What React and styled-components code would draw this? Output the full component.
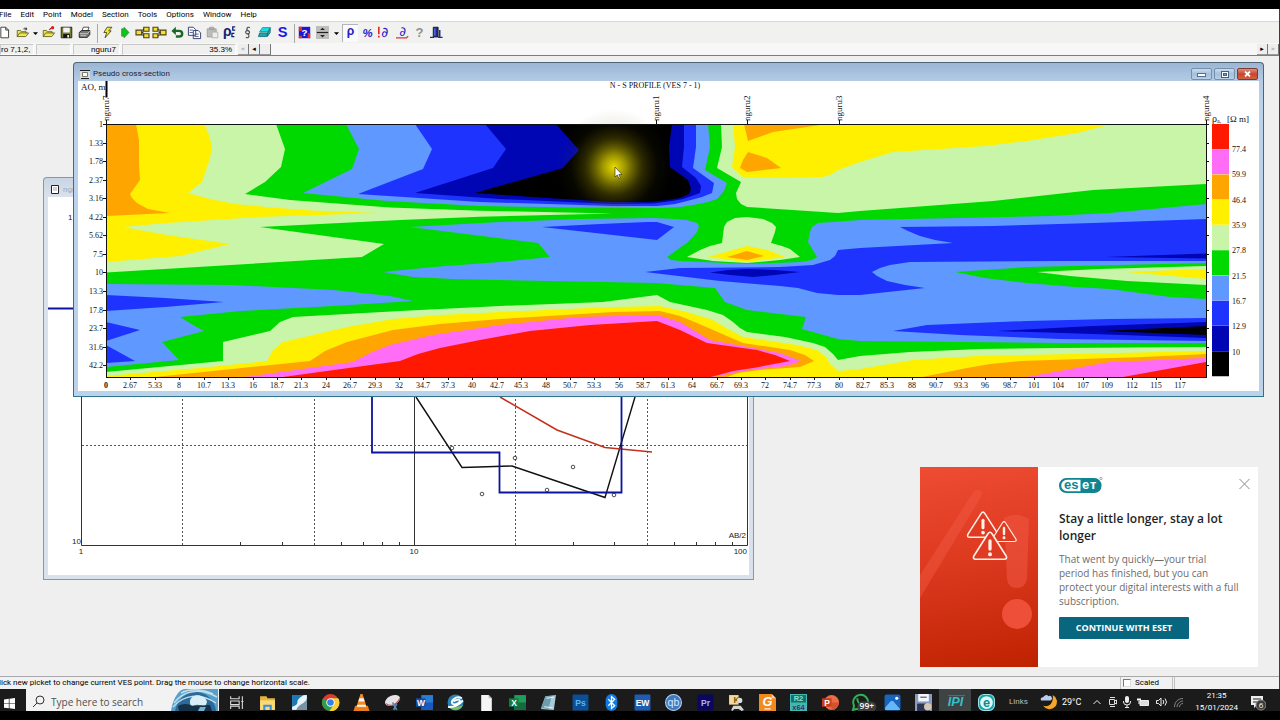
import React from "react";
import styled, { createGlobalStyle, css } from "styled-components";

const Global = createGlobalStyle`
  * { box-sizing: border-box; }
  body { margin: 0; background: #000; font-family: "Noto Sans", "Open Sans", sans-serif; }
  button, input { font-family: inherit; margin: 0; padding: 0; border: 0; background: none; color: inherit; }
`;

const ui = '"Open Sans", "Noto Sans", sans-serif';
const small = 'Roboto, "Open Sans", sans-serif';

const Screen = styled.div`
  display: flex;
  flex-direction: column;
  min-height: 100vh;
  padding: 9px 0;
  background: #000;
  overflow: hidden;
`;

const AppFrame = styled.main`
  flex: 1;
  display: flex;
  flex-direction: column;
  background: #efefef;
  border-right: 1px solid #3c3c3c;
`;

/* ---------- menu and tool bars ---------- */

const MenuBar = styled.nav`
  display: flex;
  gap: 9px;
  height: 13px;
  padding-left: 20px;
  background: #fff;
  border-bottom: 1px solid #d8d8d8;
`;

const MenuItem = styled.button`
  height: 12px;
  font: 8px/12px ${small};
  color: #000;
  ${(p) => p.$first && css`margin-left: -21px;`}
`;

const ToolBar = styled.div`
  display: flex;
  height: 21px;
  background: #f1f1f0;
`;

const ToolGroup = styled.div`
  display: flex;
  align-items: center;
  justify-content: space-between;
  flex: 0 0 ${(p) => p.$w}px;
  margin-left: ${(p) => p.$gap || 0}px;
`;

const ToolButton = styled.button`
  display: flex;
  align-items: center;
  justify-content: center;
  width: ${(p) => (p.$narrow ? 6 : 16)}px;
  height: 18px;
  ${(p) => p.$down && css`background: #fafafc; box-shadow: inset 1px 1px #b4b4bc;`}
  svg { width: ${(p) => (p.$narrow ? 5 : 13)}px; height: ${(p) => (p.$narrow ? 14 : 13)}px; display: block; overflow: visible; }
`;

const ToolSep = styled.span`
  flex: 0 0 1px;
  margin: 2px 0 0 4px;
  background: #a9a9a9;
`;

const InfoBar = styled.div`
  display: flex;
  align-items: center;
  height: 13px;
  background: #f7f7f7;
  border-bottom: 1px solid #7d7d7d;
`;

const InfoCell = styled.span`
  width: ${(p) => p.$w}px;
  height: 11px;
  margin-right: 2px;
  padding-right: ${(p) => p.$pad || 3}px;
  background: #f0f0ef;
  border: 1px solid #c9c9c9;
  border-right-color: #fff;
  border-bottom-color: #fff;
  font: 8px/10px "Liberation Sans", sans-serif;
  text-align: ${(p) => (p.$left ? "left" : "right")};
  white-space: nowrap;
`;

const ScrollKey = styled.button`
  width: 11px;
  height: 11px;
  margin-left: ${(p) => (p.$push ? "auto" : "0")};
  background: #eee;
  border-right: 1px solid #777;
  border-bottom: 1px solid #999;
  font: 7px/8px "DejaVu Sans", sans-serif;
  color: ${(p) => (p.$dim ? "#999" : "#000")};
`;

/* ---------- document windows ---------- */

const Workspace = styled.section`
  position: relative;
  flex: 1;
  min-height: 620px;
  overflow: hidden;
  background: #efefef;
`;

const Win = styled.section`
  position: absolute;
  left: ${(p) => p.$x}px;
  top: ${(p) => p.$y}px;
  width: ${(p) => p.$w}px;
  padding: 0 4px ${(p) => (p.$active ? 5 : 4)}px;
  border: 1px solid ${(p) => (p.$active ? "#4e6477" : "#8a97a6")};
  border-bottom-color: ${(p) => (p.$active ? "#2f7590" : "#8797a8")};
  border-radius: 4px 4px 0 0;
  background: ${(p) => (p.$active
    ? "linear-gradient(#9bb6d4 0, #b3cbe5 18px, #bad2ea 40px, #bad2ea 100%)"
    : "linear-gradient(#c9d5e3 0, #d8e1ec 18px, #d8e1ec 100%)")};
`;

const WinTitle = styled.header`
  display: flex;
  align-items: center;
  gap: 3px;
  height: ${(p) => (p.$tall ? 19 : 18)}px;
  padding: 4px 1px 0 2px;
`;

const WinIcon = styled.svg`
  display: block;
  width: 10px;
  height: 9px;
`;

const WinName = styled.h1`
  flex: 1;
  margin: 0;
  font: 8px/10px ${small};
  color: ${(p) => (p.$dim ? "#9aa8b8" : "#1a2430")};
`;

const WinKeys = styled.div`
  display: flex;
  gap: 2px;
`;

const WinKey = styled.button`
  display: flex;
  align-items: center;
  justify-content: center;
  width: 21px;
  height: 12px;
  border: 1px solid ${(p) => (p.$close ? "#7d3a33" : "#7690ab")};
  border-radius: 2px;
  background: ${(p) => (p.$close
    ? "linear-gradient(#dc9080, #c8452c 50%, #cf6246)"
    : "linear-gradient(#c9dbee, #a5c0dd 50%, #b7cfe7)")};
`;

const Client = styled.div`
  background: #fff;
  svg { display: block; width: 100%; height: auto; }
`;

/* ---------- notification ---------- */

const Toast = styled.aside`
  position: absolute;
  right: 21px;
  bottom: 9px;
  display: flex;
  width: 338px;
  min-height: 200px;
  background: #fff;
`;

const ToastArt = styled.div`
  flex: 0 0 118px;
  background: linear-gradient(170deg, #ee4c33 0, #dd3a20 45%, #be2200 100%);
  svg { display: block; width: 118px; height: 200px; }
`;

const ToastBody = styled.div`
  flex: 1;
  padding: 9px 8px 0 21px;
`;

const ToastTop = styled.div`
  display: flex;
  justify-content: space-between;
  height: 34px;
  svg { display: block; }
`;

const CloseButton = styled.button`
  align-self: flex-start;
  width: 11px;
  height: 15px;
`;

const ToastTitle = styled.h2`
  margin: 0 0 8px;
  font: 600 12px/17px ${ui};
  color: #1f1f1f;
  white-space: nowrap;
`;

const ToastText = styled.p`
  margin: 0;
  font: 10px/14px ${ui};
  color: #6c6c6c;
  white-space: nowrap;
`;

const Cta = styled.button`
  width: 130px;
  height: 22px;
  margin-top: 9px;
  border-radius: 1px;
  background: #08677f;
  color: #fff;
  font: 700 9px/22px ${ui};
`;

/* ---------- status and task bars ---------- */

const StatusBar = styled.footer`
  display: flex;
  height: 13px;
  background: #f1f1f1;
  border-top: 1px solid #a8a8a8;
  font: 8px/12px ${small};
  color: #000;
`;

const StatusText = styled.span`
  flex: 1;
  margin-left: -1px;
  white-space: nowrap;
`;

const ScaledBox = styled.label`
  display: flex;
  align-items: center;
  gap: 4px;
  width: 53px;
  border-left: 1px solid #c2c2c2;
  border-right: 1px solid #c2c2c2;
  input {
    appearance: none;
    width: 8px;
    height: 8px;
    margin-left: 2px;
    background: #fff;
    border: 1px solid #777;
    border-right-color: #ddd;
    border-bottom-color: #ddd;
  }
`;

const StatusEnd = styled.span`
  width: 105px;
  margin-left: 1px;
  border-left: 1px solid #c2c2c2;
`;

const TaskBar = styled.footer`
  display: flex;
  height: 22px;
  overflow: hidden;
  background: #1b1b1b;
  color: #eee;
`;

const StartButton = styled.button`
  flex: 0 0 26px;
  padding: 7px 0 0 4px;
  svg { display: block; width: 11px; height: 11px; }
`;

const SearchBox = styled.label`
  display: flex;
  flex: 0 0 193px;
  min-width: 0;
  height: 22px;
  align-items: center;
  background: #f2f2f2;
  color: #444;
  svg { display: block; flex: none; }
  input {
    flex: 1;
    width: 0;
    min-width: 0;
    height: 20px;
    margin: 4px 0 0 6px;
    font: 10px/20px ${ui};
    outline: 0;
  }
  input::placeholder { color: #505050; opacity: 1; }
`;

const TaskIcons = styled.div`
  display: flex;
  flex: 0 1 783px;
  padding-left: 2px;
`;

const TaskButton = styled.button`
  display: flex;
  flex: 1;
  justify-content: center;
  padding-top: 5px;
  ${(p) => p.$on && css`background: #3e4344;`}
  svg { display: block; width: 17px; height: 17px; overflow: visible; }
`;

const Tray = styled.div`
  display: flex;
  flex: 1;
  height: 26px;
  align-items: center;
  justify-content: space-between;
  padding: 0 14px 0 7px;
  svg { display: block; }
`;

const TrayText = styled.span`
  font: ${(p) => p.$size}px/20px ${small};
  color: ${(p) => (p.$dim ? "#bbb" : "#fff")};
`;

const Weather = styled.div`
  display: flex;
  align-items: center;
  gap: 5px;
`;

const TrayIcons = styled.div`
  display: flex;
  align-items: center;
  justify-content: space-between;
  width: 90px;
`;

const Clock = styled.time`
  height: 26px;
  padding-top: 1px;
  font: 8px/12px ${small};
  text-align: center;
  color: #fff;
  span { display: block; }
`;

/* ---------- pseudo section data ---------- */

const C = {
  red: "#ff1900", pink: "#ff6df6", orange: "#ffa500", yellow: "#fff000", lime: "#c8f5a8",
  green: "#00d900", sky: "#5f99ff", blue: "#1f33ff", navy: "#0006b4", black: "#000",
};

const regions = [
  ["green", "106,124 1206,124 1206,377 106,377"],
  ["lime", "106,124 276,124 285,149 281,167 265,182 245,194 290,200 390,207.5 480,210.7 612,213.5 480,216.7 400,220 260,227 384,244 362,257 106,272.5"],
  ["yellow", "106,124 204,124 209,135 212,147 210,158 207,167 202,182 188,193 210,199 235,204 267,207 310,210.5 377,213 260,217 167,223 123,227 167,235 230,244 180,256 106,262"],
  ["orange", "106,124 136,124 139,140 139,165 140,180 130,194 132,198 137,203 148,209 170,213 106,216"],
  ["sky", "346,124 359,149 352,169 303,193 387,201 480,206 613,208 660,208 680,207 693,205 708,202 717,199 724,191 727,183 705,170 710,147 708,124"],
  ["blue", "415,124 432,149 423,169 358,194 480,202 613,206 657,206 675,204 687,201 702,197 712,193 714,183 693,168 696,147 696,124"],
  ["navy", "485,124 506,149 493,168 415,193 500,199 613,204 653,203.5 672,201 683,199 700,193 701,186 696,178 682,167 684,147 684,124"],
  ["black", "556,124 579,150 563,168 475,193 547,198 613,202 650,202 668,200 680,198 689,194 691,189 688,180 670,167 669,147 672,124"],
  ["lime", "721,124 722,147 717,168 741,182 736,193 737,199 741,204 747,207 838,213 860,211 993,201 1093,190 1206,184 1206,124"],
  ["yellow", "733,124 735,147 732,167 743,177 757,178 823,177 832,174 838,170 860,162 893,152 940,149 985,146 1027,141 1077,133 1112,124"],
  ["orange", "744,124 748,141 773,132 827,124"],
  ["orange", "748,152 767,158 781,168 747,172 740,168 743,160"],
  ["sky", "410,227 500,222 580,219 653,218 675,219 687,220 697,223 699,226 697,232 688,242 667,257 671,260 680,261 747,264 800,262 812,260 817,257 808,242 810,232 812,227 818,223 833,222 860,220 960,218 1050,216 1110,213 1206,204 1206,343 1060,343 860,341 838,339 802,329 806,317 747,310 725,302 715,288 657,283 550,281 453,279 413,277 383,272 433,267 500,262 550,257 538,243"],
  ["blue", "542,227 600,224 647,222 657,222 674,227 657,240"],
  ["blue", "645,272 680,268 780,267 813,265 830,260 835,256 838,250 860,248 953,243 935,240 920,236 908,231 900,227 993,226 1093,223 1206,219 1206,261 1060,261 910,262 890,265 880,268 872,272 877,276 887,281 905,285 925,288 860,295 838,295 817,293 798,288 780,286 720,281"],
  ["navy", "710,272.5 728,270 747,269 775,270 800,272 775,275 753,277 730,275"],
  ["navy", "1105,257 1206,253.5 1206,258.5"],
  ["green", "955,272 1027,267 1206,263 1206,299 1170,297 1140,293 1110,289 1075,287 1027,283 985,278"],
  ["lime", "1037,272 1100,269 1206,266 1206,285 1127,281 1070,276"],
  ["yellow", "1127,272 1206,269 1206,279"],
  ["blue", "893,331 910,328 927,325 1027,321 1110,319 1206,318 1206,341 1060,339 960,335"],
  ["navy", "997,331 1093,326 1206,322 1206,338 1093,334"],
  ["black", "1103,331 1206,326 1206,335"],
  ["lime", "747,217 763,219 772,223 776,227 775,232 771,243 782,246 790,249 800,257 780,260 747,263 713,261 687,257 700,250 710,246 722,243 724,227 727,222 735,218"],
  ["yellow", "708,257 747,246 768,250 785,257 747,262"],
  ["orange", "727,257 747,251 764,256 747,260"],
  ["sky", "106,284 233,285 333,290 390,296 413,301 333,306 240,311 180,317 193,325 204,331 162,342 179,360 106,367"],
  ["blue", "106,295 165,298 224,302 165,307 106,311"],
  ["blue", "106,322 140,330 106,341"],
  ["blue", "106,345 135,361 106,363"],
  ["lime", "106,372 223,361 223,342 270,331 280,322 293,317 400,311 500,306 603,302 657,295 670,302 707,310 723,315 733,322 740,328 747,332 785,337 813,343 825,347 833,354 838,360 860,356 910,352 980,349 1060,348 1206,347 1206,377 106,377"],
  ["yellow", "106,376 200,368 267,361 273,350 283,342 347,327 393,319 440,315 500,312 613,307 660,306 687,312 713,320 728,329 743,337 797,345 817,350 826,357 830,364 838,371 860,369 913,360 977,356 1206,351 1206,377 106,377"],
  ["orange", "155,377 310,361 325,351 347,342 393,330 440,324 500,319 613,312 660,311 680,316 697,323 743,343 790,350 805,355 814,361 800,367 760,370 738,373 727,377"],
  ["orange", "922,377 967,368 990,364 1020,361 1143,357 1206,354 1206,377"],
  ["pink", "245,377 353,362 370,353 390,345 433,335 500,325 580,317 657,315 680,322 710,340 780,353 801,361 787,366 743,371 713,377"],
  ["red", "283,377 400,361 418,354 440,348 480,340 530,331 590,325 657,321 680,330 707,343 757,350 775,355 790,361 753,368 733,371 711,377"],
  ["pink", "1026,377 1110,362 1206,358 1206,377"],
  ["red", "1123,377 1206,362 1206,377"],
];

const depths = ["1", "1.33", "1.78", "2.37", "3.16", "4.22", "5.62", "7.5", "10", "13.3", "17.8", "23.7", "31.6", "42.2"];
const distances = "2.67 5.33 8 10.7 13.3 16 18.7 21.3 24 26.7 29.3 32 34.7 37.3 40 42.7 45.3 48 50.7 53.3 56 58.7 61.3 64 66.7 69.3 72 74.7 77.3 80 82.7 85.3 88 90.7 93.3 96 98.7 101 104 107 109 112 115 117".split(" ");
const scale = [["red", "77.4"], ["pink", "59.9"], ["orange", "46.4"], ["yellow", "35.9"], ["lime", "27.8"], ["green", "21.5"], ["sky", "16.7"], ["blue", "12.9"], ["navy", "10"], ["black", ""]];
const pickets = [["nguru7", 106], ["nguru1", 656], ["nguru2", 747], ["nguru3", 839], ["nguru4", 1206]];

function PseudoSection() {
  return (
    <svg viewBox="78 81 1181 310" fontFamily='"Liberation Serif", serif' fontSize="8" fill="#111" role="img" aria-label="Resistivity pseudo cross-section">
      <defs>
        <radialGradient id="glow">
          <stop offset="0" stopColor="#e8dc00" />
          <stop offset=".2" stopColor="#c4ba00" stopOpacity=".8" />
          <stop offset=".5" stopColor="#807800" stopOpacity=".35" />
          <stop offset=".75" stopColor="#605800" stopOpacity=".08" />
          <stop offset="1" stopColor="#504c00" stopOpacity="0" />
        </radialGradient>
        <clipPath id="plot"><rect x="106" y="124" width="1100" height="253" /></clipPath>
      </defs>
      <rect x="78" y="81" width="1181" height="310" fill="#fff" />
      <g clipPath="url(#plot)">
        {regions.map(([c, pts], i) => <polygon key={i} points={pts} fill={C[c]} />)}
      </g>
      <circle cx="614" cy="167" r="58" fill="url(#glow)" />
      <path d="M106.500 124V377.500M1206.500 124V377.500M106 124.500H1207M106 377.500H1207" stroke="#111" fill="none" />
      <path d="M106.500 81V97" stroke="#000" strokeWidth="2" />
      <text x="81" y="90" fontSize="9">AO, m</text>
      <text x="655" y="88" fontSize="8" textAnchor="middle">N - S PROFILE (VES 7 - 1)</text>
      {pickets.map(([name, x]) => (
        <g key={name}>
          <path d={`M${x + 0.5} 120v4`} stroke="#111" />
          <text transform={`translate(${x + 3} 121) rotate(-90)`} fontSize="9">{name}</text>
        </g>
      ))}
      {depths.map((d, i) => (
        <g key={d}>
          <path d={`M103 ${124.5 + Math.round(i * 18.55)}h3M1206 ${124.5 + Math.round(i * 18.55)}h3`} stroke="#111" />
          <text x="103" y={127 + Math.round(i * 18.55)} textAnchor="end">{d}</text>
        </g>
      ))}
      <text x="106" y="388" textAnchor="middle" fontWeight="700">0</text>
      {distances.map((d, i) => {
        const x = Math.round(106 + (i + 1) * 24.42);
        return (
          <g key={d}>
            <path d={`M${x + 0.5} 377v3`} stroke="#111" />
            <text x={x} y="388" textAnchor="middle">{d}</text>
          </g>
        );
      })}
      {scale.map(([c, label], i) => (
        <g key={c}>
          <rect x="1212" y={124 + i * 25.25} width="17" height="25" fill={C[c]} />
          <text x="1232" y={152 + i * 25.35}>{label}</text>
        </g>
      ))}
      <text x="1212" y="122" fontSize="10">ρ<tspan fontSize="6" dy="1">a,</tspan></text>
      <text x="1227" y="122" fontSize="9">[Ω m]</text>
      <path d="M615 167v10l2.300-2 1.600 3.600 1.500-.7-1.600-3.400h3.200z" fill="#fff" stroke="#222" strokeWidth=".6" />
    </svg>
  );
}

function SoundingCurve() {
  const minor = [240, 282, 341, 363, 382, 399, 573, 614, 674, 696, 715, 732];
  const points = [[452, 448], [515, 458], [573, 467], [482, 494], [547, 490], [614, 495]];
  return (
    <svg viewBox="48 197 701 378" fontFamily='"Liberation Sans", sans-serif' fontSize="8" fill="#222" role="img" aria-label="Sounding curve">
      <path d="M81.500 215V545.500H747.500M747.500 215V545.500M414.500 215V545" stroke="#333" fill="none" />
      <path d="M182.500 215V545M314.500 215V545M515.500 215V545M647.500 215V545M82 445.500H747" stroke="#555" strokeDasharray="2 2" fill="none" />
      {minor.map((x) => <path key={x} d={`M${x + 0.5} 545v-3`} stroke="#333" />)}
      <path d="M416 397L462 467.500L479 467L512 466L605 497.500L635 397" stroke="#111" strokeWidth="1.400" fill="none" />
      <path d="M500 397L557 430L605 447.500L652 452" stroke="#c2301c" strokeWidth="1.500" fill="none" />
      <path d="M48 308.500H90M372 390V452.500H499.500V492.500H621.500V390" stroke="#0a149c" strokeWidth="1.800" fill="none" />
      {points.map(([x, y]) => <circle key={x} cx={x} cy={y} r="1.800" fill="none" stroke="#222" strokeWidth=".8" />)}
      <text x="68" y="220">1</text>
      <text x="81" y="544" textAnchor="end">10</text>
      <text x="81" y="554" textAnchor="middle">1</text>
      <text x="414" y="554" textAnchor="middle">10</text>
      <text x="747" y="554" textAnchor="end">100</text>
      <text x="746" y="538" textAnchor="end">AB/2</text>
    </svg>
  );
}

/* ---------- icons ---------- */

const Svg = ({ children, ...p }) => <svg viewBox="0 0 16 16" aria-hidden="true" fill="none" {...p}>{children}</svg>;
const Glyph = ({ children, c, s = 15, w = 700, f = "Liberation Sans", y = 13, st }) => (
  <text x="8" y={y} fontSize={s} fontWeight={w} fontFamily={f} fill={c} textAnchor="middle" fontStyle={st}>{children}</text>
);
const Folder = () => <path d="M1.500 13V5.500h4l1 1.500h6v2M1.500 13l3-4.500h11L12 13z" fill="#ece85c" stroke="#5c5a10" />;
const Down = () => <svg viewBox="0 0 6 14" aria-hidden="true"><path d="M0 6h6L3 9.500z" fill="#000" /></svg>;

const fileTools = [
  ["New", <Svg><path d="M3.500 1.500h6l3.500 3.500v9.500h-9.500zM9.500 1.500v3.500h3.500" fill="#fff" stroke="#222" /></Svg>],
  ["Open", <Svg><Folder /><path d="M9 4c1-2 3-2 4 0m0-2v2.500h-2.500" stroke="#222" /></Svg>],
  ["Recent files", <Down />, true],
  ["Import", <Svg><Folder /><path d="M9 5c1-2 2-2.500 4-2.500" stroke="#d5201c" strokeWidth="1.500" /><circle cx="13" cy="2" r="2" fill="#d5201c" /></Svg>],
  ["Save", <Svg><path d="M1.500 1.500h13v13h-13z" fill="#777b33" stroke="#111" /><path d="M4 2h8v6H4z" fill="#f4f4f4" /><path d="M4 10h8v4.500H4z" fill="#111" /><path d="M9 11h2v3H9z" fill="#fff" /></Svg>],
  ["Print", <Svg><path d="M5 6l1.500-4.500h7L12 6" fill="#fff" stroke="#333" /><path d="M1.500 8l3-2.500h10v5l-3 3.500h-10z" fill="#777" stroke="#111" /><path d="M2 9.500h9.500M11.500 9.500l3-3M3 12h7" stroke="#ddd" /></Svg>],
];

const editTools = [
  ["Edit point", <Svg><path d="M7.500 1.500h6L9.500 6h3L5 14.500l2-6.500H3.500z" fill="#f2e930" stroke="#3c3b12" /></Svg>],
  ["Run", <Svg><path d="M4.500 3.500h3V1.500l6 6.500-6 6.500v-2h-3z" fill="#10c420" stroke="#118c1c" strokeWidth=".8" /></Svg>],
  ["Split layer", <Svg><path d="M0 5h7v6H0zM9.500 1.500h6.500v5H9.500zM9.500 9.500h6.500v5H9.500z" fill="#f3df37" stroke="#4f4511" strokeWidth="1.400" /><path d="M7 8h1.500M9.500 4h-1v8h1" stroke="#222" /></Svg>],
  ["Join layers", <Svg><path d="M9 5h7v6H9zM0 1.500h6v5H0zM0 9.500h6v5H0z" fill="#f3df37" stroke="#4f4511" strokeWidth="1.400" /><path d="M9 8H7.500M6 4h1.500v8H6" stroke="#222" /></Svg>],
  ["Undo", <Svg><path d="M3 6h7c5 0 5 7 0 7H6" stroke="#176b27" strokeWidth="3" /><path d="M.5 6L6 1v10z" fill="#176b27" /></Svg>],
  ["Copy", <Svg><path d="M.5 1.500h6l3 3v7h-9zM6.500 5.500h6l3 3v7h-9z" fill="#fff" stroke="#394177" strokeWidth="1.200" /><path d="M2 5h4M2 8h4M8 10h5M8 13h5" stroke="#394177" /></Svg>],
  ["Paste", <Svg><path d="M1.500 3.500h11v10h-11zM4.500 1.500h5v3h-5z" fill="#bdbdbd" stroke="#9a9a9a" /><path d="M7.500 7.500h7v7h-7z" fill="#eee" stroke="#aaa" /></Svg>],
  ["Resistivity values", <Svg><text x="0" y="12" fontSize="17" fontWeight="700" fontFamily="Liberation Sans" fill="#15206f">ρ</text><path d="M15 1h-3v4h3M14 9h-3v4h3" stroke="#15206f" strokeWidth="1.600" /></Svg>],
  ["Section mark", <Svg><path d="M11 2c-4-2-5 3-2 4s1 5-2 3.500 0-6 3-3M6 14c4 2 5-3 2-5" stroke="#555" strokeWidth="1.500" /></Svg>],
  ["Section view", <Svg><path d="M5.500 2h10L12 7H2z" fill="#1bdce6" stroke="#148890" /><path d="M2 8.500h10l-1.500 4.500H.5zM12 8l3-5v5l-3.500 5z" fill="#16a9b4" stroke="#136a70" /></Svg>],
  ["Statistics", <Svg><Glyph c="#1a16e8" s={18} y={14}>S</Glyph></Svg>],
];

const viewTools = [
  ["Help", <Svg><path d="M1 1h14v14H1z" fill="#1a1ad5" /><path d="M1 1h4v5H1zM12 9h3v6h-3zM1 12h4v3H1z" fill="#e23424" /><Glyph c="#fff" s={12} y={12}>?</Glyph></Svg>],
  ["Scale", <Svg><path d="M0 0h16v16H0z" fill="#bdbdbd" /><path d="M1 8h14" stroke="#222" strokeWidth="1.500" /><path d="M8 2L5 5h6zM8 14l3-3H5z" fill="#222" /></Svg>],
  ["Scale options", <Down />, true],
];

const modeTools = [
  ["Resistivity", <Svg><Glyph c="#2721c9" s={15} y={11} w={700} f="Liberation Sans">ρ</Glyph></Svg>],
  ["Percent", <Svg><Glyph c="#2721c9" s={14} st="italic">%</Glyph></Svg>],
  ["Vertical derivative", <Svg><path d="M1 1v9M1 12v2" stroke="#e02b22" strokeWidth="2" /><text x="4" y="14" fontSize="17" fontFamily="DejaVu Sans" fill="#2721c9">∂</text></Svg>],
  ["Derivative", <Svg><Glyph c="#2721c9" s={16} y={12} w={400} f="DejaVu Sans">∂</Glyph><path d="M0 14.500h13l2-2" stroke="#d8362e" strokeWidth="1.500" /></Svg>],
  ["About", <Svg><Glyph c="#8f8f8f" s={16} y={14}>?</Glyph></Svg>],
  ["Exit", <Svg><path d="M4 1.500h6v12H4z" fill="#1c2c92" stroke="#111" /><path d="M0 14h5M10 14h5.500M12 5v9" stroke="#1c2c92" strokeWidth="1.800" /><path d="M6 3v9" stroke="#7ea0ff" /></Svg>],
];

const Tile = ({ bg, fg = "#fff", s = 8, y = 11, children, stroke }) => (
  <Svg><rect x=".5" y=".5" width="15" height="15" rx="1" fill={bg} stroke={stroke} /><Glyph c={fg} s={s} y={y}>{children}</Glyph></Svg>
);

const apps = [
  ["Task view", <Svg><path d="M2.500 2v2.500h8V2M2.500 14v-2.500h8V14M2.500 6.500h8v3.500h-8zM13.500 2v12M12.500 7h2" stroke="#ddd" /></Svg>],
  ["File Explorer", <Svg><path d="M1 2h6l1 2h7v11H1z" fill="#e8b53c" /><path d="M1 6h14v9H1z" fill="#f9d978" /><path d="M4 15v-5h8v5h-2v-3H6v3z" fill="#3c8fd6" /></Svg>],
  ["Surfer", <Svg><path d="M1 1h14v14H1z" fill="#e9f3fa" /><path d="M1 1h11C7 4 6 6 6 8S4 11 1 12z" fill="#1b78b5" /><path d="M15 4c-1 5-9 6-10 11H15z" fill="#7893a6" /></Svg>],
  ["Chrome", <Svg><circle cx="8" cy="8" r="8" fill="#dc3c2e" /><path d="M8 8L1 4a8 8 0 0 0 6 12z" fill="#2d9e4b" /><path d="M8 8h-1l0 8a8 8 0 0 0 8-12H8z" fill="#f9cf34" /><path d="M8 8L4.500 10 7 16l4-6z" fill="#2d9e4b" /><path d="M8 16l4-8 3.300-4A8 8 0 0 1 8 16" fill="#f9cf34" /><circle cx="8" cy="8" r="4" fill="#fff" /><circle cx="8" cy="8" r="3.100" fill="#397ee8" /></Svg>],
  ["VLC", <Svg><path d="M2 11h12l1.500 5H.5z" fill="#ed7a1b" /><path d="M7 0h2l4 13H3z" fill="#f28a21" /><path d="M6 4h4l1 3H5zM4.200 10h7.600l.7 2h-9z" fill="#f7f7f7" /></Svg>],
  ["Snipping", <Svg><ellipse cx="8" cy="6" rx="7.500" ry="4.500" transform="rotate(-25 8 6)" fill="#e7e3e5" /><path d="M2 9c4 3 9 2 13-5" stroke="#b24f58" /><path d="M8 8l4 7M12 9l-3 6" stroke="#578dbb" strokeWidth="1.500" /></Svg>],
  ["Word", <Svg><path d="M5 1h11v14H5z" fill="#2b7cd3" /><path d="M5 8h11v7H5z" fill="#185abd" /><path d="M0 4h9v8H0z" fill="#114da2" /><text x="1" y="11" fontSize="8" fontWeight="700" fontFamily="Liberation Sans" fill="#fff">W</text></Svg>],
  ["Browser", <Svg><circle cx="8" cy="8" r="7.500" fill="#2b83b5" /><path d="M1 11c3 5 11 6 14-1-3 2-7 3-14 1" fill="#7fc34b" /><path d="M14 4C8 1 3 7 5 9s8-1 7-3-6 1-6 1M1 12c5 1 11-2 14-6" stroke="#fff" strokeWidth="1.800" /></Svg>],
  ["Document", <Svg><path d="M3 1h7l3 3v12H3z" fill="#f5f5f5" /><path d="M10 1v3h3" fill="#bbb" /></Svg>],
  ["Excel", <Svg><path d="M5 1h11v14H5z" fill="#219b60" /><path d="M5 8h11v7H5z" fill="#126c40" /><path d="M0 4h9v8H0z" fill="#107c41" /><text x="2" y="11" fontSize="8" fontWeight="700" fontFamily="Liberation Sans" fill="#fff">X</text></Svg>],
  ["Notepad", <Svg><path d="M5 2l10-1-2 14-12-1z" fill="#a9cbd7" /><path d="M5 2L1 13l7 1 3-12z" fill="#6d9dac" /><path d="M6 4l7-1M4 12l8 1" stroke="#e6f2f4" /></Svg>],
  ["Photoshop", <Tile bg="#0b4f96" fg="#5db5f5">Ps</Tile>],
  ["Bluetooth", <Svg><rect x="2.500" width="11" height="16" rx="5.500" fill="#1179df" /><path d="M5 5l6 6-3 2.500V2.500L11 5l-6 6" stroke="#fff" strokeWidth="1.200" /></Svg>],
  ["EasyWorship", <Tile bg="#1e5cb3" s={8}>EW</Tile>],
  ["QuickBooks", <Svg><circle cx="8" cy="8" r="7.500" fill="#3e79c2" stroke="#b8d0ed" /><Glyph c="#d9eaff" s={10} w={400} y={11}>qb</Glyph></Svg>],
  ["Premiere", <Tile bg="#0a075e" fg="#b7adf5">Pr</Tile>],
  ["Key tool", <Svg><path d="M1 1h9v9H1z" fill="#f0dc9a" /><Glyph c="#725417" s={8} y={8}>K</Glyph><circle cx="11" cy="6" r="2.500" fill="#ddd" /><path d="M3 15l2-4h7l3 4-2 1-3-2H6l-2 2z" fill="#d5d5d5" /></Svg>],
  ["Gom", <Svg><path d="M0 0h12l4 4v12H0z" fill="#f38a1e" /><path d="M12 0v4h4" fill="#ffd2a0" /><Glyph c="#fff" s={12} y={11} st="italic">G</Glyph><path d="M5 14h6" stroke="#fff" /></Svg>],
  ["R2 x64", <Svg><path d="M0 0h16v16H0z" fill="#43b7b4" /><path d="M1 1h14v7H1z" fill="#13716b" /><Glyph c="#86e4c8" s={7} y={7}>R2</Glyph><Glyph c="#4d2a60" s={7} y={15}>x64</Glyph></Svg>],
  ["PowerPoint", <Svg><circle cx="9" cy="8" r="7" fill="#ed6c47" /><path d="M9 8h7a7 7 0 0 1-7 7z" fill="#d35230" /><path d="M0 4h9v8H0z" fill="#c43e1c" /><text x="2" y="11" fontSize="8" fontWeight="700" fontFamily="Liberation Sans" fill="#fff">P</text></Svg>],
  ["WhatsApp", <Svg><path d="M0 15l1-4a7 7 0 1 1 3 3zM4 4c0 4 3 7 6 7" stroke="#31b457" strokeWidth="1.800" /><rect x="4" y="7" width="18" height="10" rx="5" fill="#3b3d3c" /><text x="13" y="14" fontSize="8" fontFamily="Open Sans" fontWeight="600" fill="#fff" textAnchor="middle">99+</text></Svg>],
  ["Photos", <Svg><rect x=".5" y=".5" width="15" height="15" rx="2" fill="#1765bd" /><path d="M1 13l5-6c1-1 2-1 3 0l6 7v1H1z" fill="#65b8f5" /><circle cx="12" cy="4" r="1.500" fill="#fff" /></Svg>],
  ["Saver", <Svg><path d="M0 0h16v16H0z" fill="#8a9bc2" /><path d="M3 0h10v7H3z" fill="#f4f6f9" /><path d="M5 3h6" stroke="#34436c" /><path d="M2 9h12v7H2z" fill="#2d3450" /><circle cx="12" cy="12" r="3.500" fill="#d7c7b5" /></Svg>],
  ["IPI2Win", <Svg><Glyph c="#36bfc9" s={12} y={11} st="italic">IPI</Glyph><path d="M1 1.500h16" stroke="#1b8791" /></Svg>, true],
  ["ESET", <Svg><rect x=".5" y=".5" width="15" height="15" rx="5" fill="#0aa5ad" stroke="#9de4e7" /><circle cx="8" cy="8" r="6" fill="#dff8f8" /><Glyph c="#088b94" s={12} y={12}>e</Glyph></Svg>],
];

const Tools = ({ items, downFirst }) => items.map(([label, icon, narrow], i) => (
  <ToolButton key={label} aria-label={label} $narrow={narrow} $down={downFirst && i === 0}>{icon}</ToolButton>
));

const WarnTriangle = ({ x, y, s }) => (
  <g transform={`translate(${x} ${y}) scale(${s})`} stroke="#fff0e8" strokeLinejoin="round" strokeLinecap="round">
    <path d="M-2-11Q0-14 2-11L16 11Q17 14 14 14H-14Q-17 14-16 11Z" fill="#df3b22" strokeWidth="1.600" />
    <path d="M0-4V4" strokeWidth="3.200" />
    <path d="M0 9v.2" strokeWidth="3.800" />
  </g>
);

export default function App() {
  return (
    <>
      <Global />
      <Screen>
        <AppFrame>
          <MenuBar aria-label="Main menu">
            {["File", "Edit", "Point", "Model", "Section", "Tools", "Options", "Window", "Help"].map((m, i) => (
              <MenuItem key={m} $first={i === 0}>{m}</MenuItem>
            ))}
          </MenuBar>
          <ToolBar role="toolbar" aria-label="Tools">
            <ToolGroup $w={97} $gap={-4}><Tools items={fileTools} /></ToolGroup>
            <ToolSep />
            <ToolGroup $w={191} $gap={1}><Tools items={editTools} /></ToolGroup>
            <ToolSep />
            <ToolGroup $w={43} $gap={1}><Tools items={viewTools} /></ToolGroup>
            <ToolGroup $w={103} $gap={3}><Tools items={modeTools} downFirst /></ToolGroup>
          </ToolBar>
          <InfoBar>
            <InfoCell $w={34} $left>ro 7,1,2,</InfoCell>
            <InfoCell $w={35} />
            <InfoCell $w={47}>nguru7</InfoCell>
            <InfoCell $w={114}>35.3%</InfoCell>
            <ScrollKey aria-label="First" $dim>«</ScrollKey>
            <ScrollKey aria-label="Previous">◂</ScrollKey>
            <ScrollKey aria-label="Thumb" />
            <ScrollKey aria-label="Next" $push>▸</ScrollKey>
            <ScrollKey aria-label="Last" $dim>»</ScrollKey>
          </InfoBar>

          <Workspace>
            <Win $x={43} $y={121} $w={711}>
              <WinTitle $tall>
                <WinIcon viewBox="0 0 10 9" aria-hidden="true"><path d="M1.500.5h7v8h-7z" fill="#fff" stroke="#222" /><path d="M3 3h4M3 5h4" stroke="#aaa" /></WinIcon>
                <WinName $dim>nguru7</WinName>
              </WinTitle>
              <Client><SoundingCurve /></Client>
            </Win>
            <Win $x={73} $y={6} $w={1191} $active>
              <WinTitle>
                <WinIcon viewBox="0 0 10 9" aria-hidden="true"><path d="M0 0h10v9H0z" fill="#dcdcd4" /><path d="M0 .5h10M1 8.500h8" stroke="#222" /><path d="M2.500 2.500h5v4h-5z" fill="#fff" stroke="#777" /></WinIcon>
                <WinName>Pseudo cross-section</WinName>
                <WinKeys>
                  <WinKey aria-label="Minimize"><svg width="9" height="6"><rect x=".5" y="2.500" width="8" height="3" fill="#fff" stroke="#54708e" /></svg></WinKey>
                  <WinKey aria-label="Restore"><svg width="8" height="7"><rect x=".5" y=".5" width="7" height="6" fill="#fff" stroke="#42607f" /><rect x="2.500" y="2.500" width="3" height="2" fill="#7f9dbd" stroke="#42607f" /></svg></WinKey>
                  <WinKey aria-label="Close window" $close><svg width="7" height="6"><path d="M1 .5l5 5M6 .5l-5 5" stroke="#fff" strokeWidth="1.800" /></svg></WinKey>
                </WinKeys>
              </WinTitle>
              <Client><PseudoSection /></Client>
            </Win>

            <Toast aria-label="ESET notification">
              <ToastArt>
                <svg viewBox="0 0 118 200" aria-hidden="true">
                  <path d="M0 108L54 24Q64 20 61 30L0 131Z" fill="#ef5540" opacity=".5" />
                  <path d="M84 51Q96 44 109 52L107 112Q105 121 97 121Q88 121 87 112Z" fill="#ef5540" opacity=".6" />
                  <circle cx="97" cy="147" r="15" fill="#ee4f39" />
                  <WarnTriangle x={63} y={57} s={0.95} />
                  <WarnTriangle x={84} y={64} s={0.75} />
                  <WarnTriangle x={70} y={78} s={1.02} />
                </svg>
              </ToastArt>
              <ToastBody>
                <ToastTop>
                  <svg width="46" height="18" viewBox="0 0 46 18" role="img" aria-label="ESET">
                    <rect x=".8" y="2.800" width="41" height="13.500" rx="6.500" fill="#11858f" stroke="#11858f" strokeWidth="1.500" />
                    <path d="M21.500 3.800H8a5.700 5.700 0 0 0 0 11.500h13.500z" fill="#fff" />
                    <text x="5" y="13" fontSize="13" fontWeight="700" fontFamily="Liberation Sans" fill="#11858f">es</text>
                    <text x="23" y="13" fontSize="13" fontWeight="700" fontFamily="Liberation Sans" fill="#fff">e</text>
                    <text x="31" y="13" fontSize="13" fontWeight="700" fontFamily="Liberation Sans" fill="#fff">т</text>
                    <circle cx="42" cy="2.500" r="1.200" fill="none" stroke="#678" strokeWidth=".6" />
                  </svg>
                  <CloseButton aria-label="Close notification">
                    <svg width="11" height="15" viewBox="0 0 11 15"><path d="M.5 3l10 10M10.500 3l-10 10" stroke="#8a8a8a" /></svg>
                  </CloseButton>
                </ToastTop>
                <ToastTitle>Stay a little longer, stay a lot<br />longer</ToastTitle>
                <ToastText>
                  That went by quickly—your trial<br />period has finished, but you can<br />
                  protect your digital interests with a full<br />subscription.
                </ToastText>
                <Cta>CONTINUE WITH ESET</Cta>
              </ToastBody>
            </Toast>
          </Workspace>

          <StatusBar>
            <StatusText>lick new picket to change current VES point. Drag the mouse to change horizontal scale.</StatusText>
            <ScaledBox><input type="checkbox" />Scaled</ScaledBox>
            <StatusEnd />
          </StatusBar>
        </AppFrame>

        <TaskBar>
          <StartButton aria-label="Start">
            <Svg><path d="M0 2l7-1v6.500H0zM8 1l8-1v7.500H8zM0 8.500h7V15l-7-1zM8 8.500h8V16l-8-1z" fill="#fff" /></Svg>
          </StartButton>
          <SearchBox>
            <svg width="19" height="16" viewBox="0 0 19 16" aria-hidden="true"><circle cx="14" cy="8" r="4" fill="none" stroke="#333" /><path d="M11 11l-4 4" stroke="#333" /></svg>
            <input type="search" aria-label="Search" placeholder="Type here to search" />
            <svg width="48" height="22" viewBox="0 0 48 22" aria-hidden="true">
              <path d="M0 22C2 9 8 0 14 0H47V22Z" fill="#5b9fc8" />
              <path d="M4 22C7 7 18 2 27 3S44 12 45 22" fill="#2d6a98" />
              <path d="M3 14C12 2 28-2 46 8M2 18C12 6 29 3 45 14M10 4C20-1 30 0 42 5" stroke="#b9e0ef" strokeWidth="1.500" fill="none" />
              <path d="M19 14C18 4 34 4 36 13L34 18C29 15 23 15 20 18Z" fill="#d8eff8" />
              <path d="M7 17Q14 13 22 17L39 16 41 22H8Z" fill="#163046" />
              <path d="M29 18l6 0-2 4h-6z" fill="#70b4d4" />
            </svg>
          </SearchBox>
          <TaskIcons>
            {apps.map(([label, icon, on]) => <TaskButton key={label} aria-label={label} $on={on}>{icon}</TaskButton>)}
          </TaskIcons>
          <Tray>
            <TrayText $size={8} $dim>Links</TrayText>
            <Weather>
              <svg width="17" height="17" viewBox="0 0 16 16" aria-hidden="true"><path d="M12 1a7 7 0 1 1-9 10c6 2 10-3 9-10" fill="#f5a62b" /><path d="M1 6a2 2 0 0 1 2-3 3 3 0 0 1 5-1 2 2 0 0 1 2 4z" fill="#b8cdf0" /></svg>
              <TrayText $size={9}>29°C</TrayText>
            </Weather>
            <TrayIcons>
              <svg width="8" height="6"><path d="M.5 5L4 1.500 7.500 5" fill="none" stroke="#eee" /></svg>
              <svg width="9" height="12"><path d="M2 1.500h5M2 10.500h5M1.500 3.500h5v5h-5zM6.500 5l2-1v4l-2-1" fill="none" stroke="#ddd" /></svg>
              <svg width="8" height="12"><rect x="2" y="0" width="4" height="7" rx="2" fill="#eee" /><path d="M.5 5v1a3.500 3 0 0 0 7 0V5M4 9v2.500M2 11.500h4" fill="none" stroke="#eee" /></svg>
              <svg width="12" height="9"><path d="M3 2.500h8.500v5H3z" fill="#ddd" stroke="#eee" /><path d="M0 1.500h4M1 0v3M3 0v3M2 3v3" stroke="#fff" /></svg>
              <svg width="12" height="10"><path d="M.5 3.500h2L5 1v8L2.500 6.500h-2zM7 3q1.500 2 0 4M9 1.500q3 3.500 0 7" fill="none" stroke="#eee" /></svg>
              <svg width="9" height="9"><path d="M.5 9C.5 4 4 .5 9 .5M3 9c0-3 3-6 6-6M5.500 9C5.500 7 7 5.500 9 5.500" fill="none" stroke="#888" /></svg>
            </TrayIcons>
            <Clock><span>21:35</span><span>15/01/2024</span></Clock>
            <svg width="16" height="17" viewBox="0 0 16 17" role="img" aria-label="6 notifications">
              <path d="M1 2h12v9H7l-3 3v-3H1z" fill="#eee" /><path d="M3 5h8M3 8h6" stroke="#222" />
              <circle cx="11" cy="11" r="5" fill="#3a3a3a" stroke="#888" />
              <text x="11" y="14" fontSize="8" fontFamily="Open Sans" fill="#fff" textAnchor="middle">6</text>
            </svg>
          </Tray>
        </TaskBar>
      </Screen>
    </>
  );
}
